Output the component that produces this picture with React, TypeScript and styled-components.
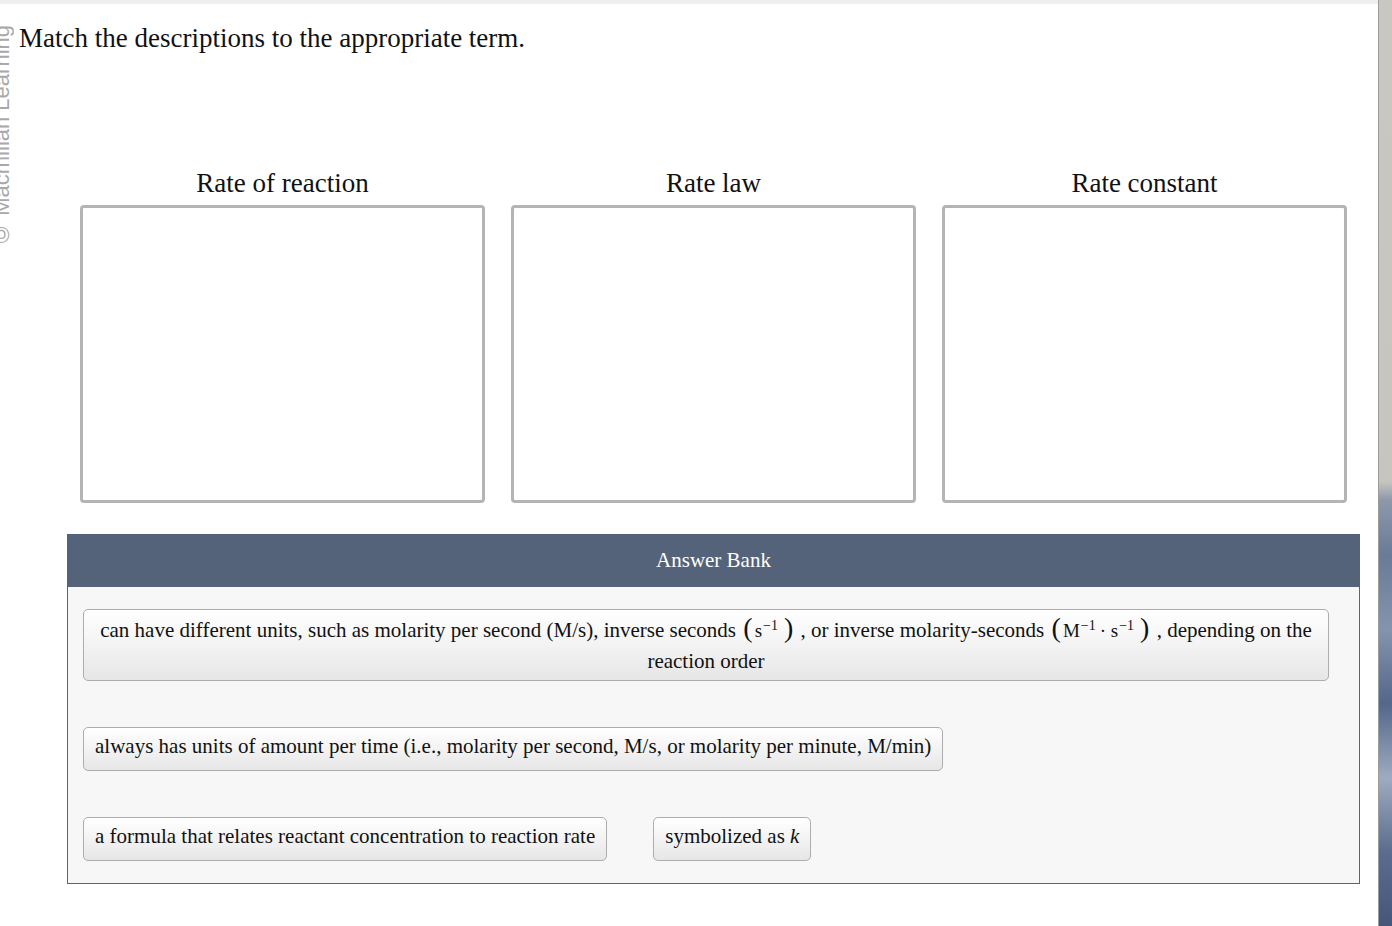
import * as React from "react";
import styled, { createGlobalStyle } from "styled-components";

const serif = `"Liberation Serif", "Times New Roman", Times, serif`;

const GlobalStyle = createGlobalStyle`
  html, body {
    margin: 0;
    padding: 0;
    background: #ffffff;
  }
  body {
    font-family: ${serif};
    color: #111;
  }
`;

const Page = styled.div`
  display: flex;
  width: 1392px;
  height: 926px;
  overflow: hidden;
  position: relative;
`;

const Main = styled.div`
  flex: 1;
  border-top: 4px solid #efefef;
  display: flex;
  flex-direction: column;
`;

// desktop wallpaper peeking at the right edge
const DesktopStrip = styled.div`
  width: 13px;
  border-left: 1px solid #9d9b96;
  background: linear-gradient(
    180deg,
    #c9c7c1 0%,
    #c7c5bf 52%,
    #8d98aa 54%,
    #6a7b97 60%,
    #8494ad 68%,
    #53678a 76%,
    #9eabbf 84%,
    #5a6d8e 92%,
    #44577a 100%
  );
`;

const Watermark = styled.div`
  position: absolute;
  left: -9px;
  top: 25px;
  writing-mode: vertical-rl;
  transform: rotate(180deg);
  font-family: "Liberation Sans", Arial, sans-serif;
  font-size: 22px;
  line-height: 22px;
  color: #a9a9a9;
  white-space: nowrap;
`;

const Title = styled.h1`
  margin: 19px 0 0 19px;
  font-family: ${serif};
  font-size: 27px;
  line-height: 30px;
  font-weight: normal;
`;

const Terms = styled.div`
  display: grid;
  grid-template-columns: repeat(3, 405px);
  column-gap: 26px;
  margin: 115px 0 0 80px;
`;

const TermColumn = styled.div`
  display: flex;
  flex-direction: column;
`;

const TermHeading = styled.div`
  text-align: center;
  font-family: ${serif};
  font-size: 27px;
  line-height: 30px;
  margin-bottom: 7px;
`;

const DropBox = styled.div`
  height: 292px;
  border: 3px solid #b4b4b4;
  border-radius: 4px;
  background: #fff;
`;

const Bank = styled.div`
  margin: 31px 0 0 67px;
  width: 1293px;
  display: flex;
  flex-direction: column;
`;

const BankHeader = styled.div`
  height: 53px;
  background: #546379;
  color: #fff;
  font-family: ${serif};
  font-size: 21px;
  display: flex;
  align-items: center;
  justify-content: center;
`;

const BankBody = styled.div`
  background: #f7f7f7;
  border: 1px solid #56657a;
  border-top: none;
  padding: 22px 15px 22px 15px;
  display: flex;
  flex-wrap: wrap;
  gap: 46px;
`;

const Chip = styled.div<{ $tall?: boolean }>`
  max-width: 1222px;
  padding: ${(p) => (p.$tall ? "4px 11px" : "6px 11px 12px")};
  border: 1px solid #adadad;
  border-radius: 5px;
  background: linear-gradient(180deg, #ffffff 0%, #f3f3f3 50%, #e6e6e6 100%);
  font-family: ${serif};
  font-size: 21px;
  line-height: ${(p) => (p.$tall ? "30px" : "24px")};
  text-align: center;
`;

const Paren = styled.span`
  font-size: 28px;
  line-height: 28px;
  margin: 0 2px;
`;

const Sup = styled.sup`
  font-size: 14px;
  line-height: 14px;
  vertical-align: 7px;
  margin-left: 1px;
  margin-right: 4px;
`;

const Unit = styled.span`
  font-size: 19px;
`;

const Var = styled.i`
  font-style: italic;
`;

const terms = ["Rate of reaction", "Rate law", "Rate constant"];

export default function App() {
  return (
    <Page>
      <GlobalStyle />
      <Watermark>© Macmillan Learning</Watermark>
      <Main>
        <Title>Match the descriptions to the appropriate term.</Title>
        <Terms>
          {terms.map((t) => (
            <TermColumn key={t}>
              <TermHeading>{t}</TermHeading>
              <DropBox />
            </TermColumn>
          ))}
        </Terms>
        <Bank>
          <BankHeader>Answer Bank</BankHeader>
          <BankBody>
            <Chip $tall>
              can have different units, such as molarity per second (M/s), inverse seconds{" "}
              <Paren>(</Paren>
              <Unit>
                s<Sup>−1</Sup>
              </Unit>
              <Paren>)</Paren> , or inverse molarity-seconds <Paren>(</Paren>
              <Unit>
                M<Sup>−1</Sup>· s<Sup>−1</Sup>
              </Unit>
              <Paren>)</Paren> , depending on the reaction order
            </Chip>
            <Chip>
              always has units of amount per time (i.e., molarity per second, M/s, or molarity per
              minute, M/min)
            </Chip>
            <Chip>a formula that relates reactant concentration to reaction rate</Chip>
            <Chip>
              symbolized as <Var>k</Var>
            </Chip>
          </BankBody>
        </Bank>
      </Main>
      <DesktopStrip />
    </Page>
  );
}
